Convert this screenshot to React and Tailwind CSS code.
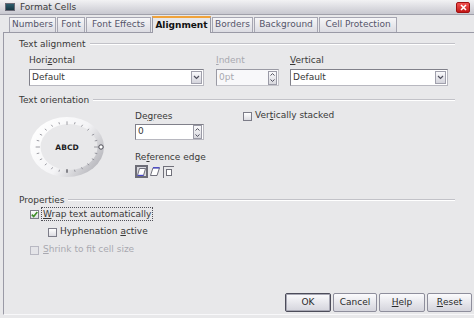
const font = "font-['DejaVu_Sans','Liberation_Sans',sans-serif]";

function Chevron() {
  return (
    <svg width="7" height="5" viewBox="0 0 7 5">
      <path d="M1 1l2.5 2.5L6 1" fill="none" stroke="#50505e" strokeWidth="1.2" />
    </svg>
  );
}

function Spinner() {
  return (
    <div className="w-[9px] h-[14px] flex flex-col border border-[#9a9aa6] bg-gradient-to-b from-[#fafafc] to-[#d8d8de]">
      <div className="flex-1 flex items-center justify-center">
        <svg width="5" height="3" viewBox="0 0 5 3">
          <path d="M0.5 2.5L2.5 0.6L4.5 2.5" fill="none" stroke="#50505e" strokeWidth="1" />
        </svg>
      </div>
      <div className="flex-1 flex items-center justify-center">
        <svg width="5" height="3" viewBox="0 0 5 3">
          <path d="M0.5 0.5L2.5 2.4L4.5 0.5" fill="none" stroke="#50505e" strokeWidth="1" />
        </svg>
      </div>
    </div>
  );
}

function Select({ className }) {
  return (
    <div className={`h-[17px] bg-white border border-[#80808a] border-b-[#b8b8c0] border-r-[#b8b8c0] flex items-center pl-[2px] pr-[1px] ${className}`}>
      <span className="flex-1">Default</span>
      <span className="w-[11px] h-[13px] border border-[#a0a0ac] bg-gradient-to-b from-[#fafafc] to-[#d4d4dc] flex items-center justify-center">
        <Chevron />
      </span>
    </div>
  );
}

function Check({ checked, disabled }) {
  return (
    <span
      className={`w-[9px] h-[9px] shrink-0 border flex items-center justify-center ${
        disabled ? "border-[#b8b8c2] bg-[#e4e4e8]" : "border-[#7c7c88] bg-gradient-to-b from-white to-[#dcdce2]"
      }`}
    >
      {checked && (
        <svg width="7" height="7" viewBox="0 0 7 7">
          <path d="M0.8 3.6L2.7 5.6L6.3 1" fill="none" stroke="#3f8f2a" strokeWidth="1.6" />
        </svg>
      )}
    </span>
  );
}

function Heading({ children }) {
  return (
    <div className="w-[436px] h-[12px] flex items-center gap-[4px]">
      <span className="leading-[12px]">{children}</span>
      <span className="flex-1 h-[2px] border-t border-[#c2c2c8] border-b border-b-white" />
    </div>
  );
}

function Dial() {
  const ticks = [];
  for (let i = 0; i < 24; i++) {
    const a = (i * 15 * Math.PI) / 180;
    const c = Math.cos(a);
    const s = Math.sin(a);
    const r1 = i % 6 === 0 ? 0.82 : 0.87;
    ticks.push(
      <line
        key={i}
        x1={40 + c * 33 * r1}
        y1={34 - s * 27 * r1}
        x2={40 + c * 33 * 0.95}
        y2={34 - s * 27 * 0.95}
        stroke={i === 18 ? "#505058" : "#85858e"}
        strokeWidth={i === 18 ? 1.3 : 0.8}
      />
    );
  }
  return (
    <svg width="80" height="68" viewBox="0 0 80 68">
      <defs>
        <linearGradient id="ring" x1="0" y1="0.2" x2="1" y2="0.8">
          <stop offset="0" stopColor="#ffffff" />
          <stop offset="0.55" stopColor="#f4f4f6" />
          <stop offset="1" stopColor="#b0b0b6" />
        </linearGradient>
      </defs>
      <ellipse cx="40" cy="34" rx="37" ry="30" fill="url(#ring)" />
      <ellipse cx="42" cy="34" rx="28.5" ry="23" fill="#e8e8ea" />
      {ticks}
      <circle cx="74" cy="34" r="2.2" fill="#ffffff" stroke="#3a3a44" strokeWidth="0.9" />
      <text x="40" y="37" textAnchor="middle" fontSize="7.5" fontWeight="bold" fill="#1a1a1a" fontFamily="DejaVu Sans, sans-serif">
        ABCD
      </text>
    </svg>
  );
}

function Tab({ label, w, active }) {
  if (active) {
    return (
      <div className={`${w} h-[17px] -mb-px relative z-10 bg-[#e8e8ea] border border-[#9a9aa6] border-b-0 border-t-2 border-t-[#f0a23a] flex items-center justify-center font-bold text-[#111]`}>
        {label}
      </div>
    );
  }
  return (
    <div className={`${w} h-[15px] border border-[#a6a6b2] border-b-0 bg-gradient-to-b from-[#f6f6f8] to-[#dcdce2] flex items-center justify-center text-[#55556a]`}>
      {label}
    </div>
  );
}

function Btn({ children, w, def }) {
  return (
    <div
      className={`${w} h-[19px] rounded-[2px] flex items-center justify-center bg-gradient-to-b from-[#fbfbfd] to-[#d4d4dc] text-[#2a2a2a] border ${
        def ? "border-[#4c4c5a] shadow-[inset_0_0_0_1px_#a8a8b4]" : "border-[#8e8e9c]"
      }`}
    >
      {children}
    </div>
  );
}

export default function App() {
  return (
    <div className={`w-[474px] h-[318px] bg-[#e8e8ea] text-[9px] text-[#383838] overflow-hidden flex flex-col ${font}`}>
      {/* title bar */}
      <div className="h-[15px] shrink-0 flex items-center bg-gradient-to-b from-[#f2f2f4] to-[#c8c8d0] border-b border-[#a0a0aa]">
        <span className="ml-[5px] w-[10px] h-[8px] border border-[#6a6a76] bg-gradient-to-b from-[#2c5d6e] to-[#173844]" />
        <span className="ml-[5px] text-[#3a3a3a] leading-[12px]">Format Cells</span>
        <span className="ml-auto mr-[4px] w-[14px] h-[11px] rounded-[2px] bg-gradient-to-b from-[#f25050] to-[#c41414] border border-[#a01010] flex items-center justify-center">
          <svg width="7" height="7" viewBox="0 0 7 7">
            <path d="M1 1L6 6M6 1L1 6" stroke="#fff" strokeWidth="1.6" />
          </svg>
        </span>
      </div>

      {/* tabs */}
      <div className="h-[17px] shrink-0 flex items-end pl-[9px] gap-[1px]">
        <Tab label="Numbers" w="w-[47px]" />
        <Tab label="Font" w="w-[28px]" />
        <Tab label="Font Effects" w="w-[65px]" />
        <Tab label="Alignment" w="w-[59px]" active />
        <Tab label="Borders" w="w-[41px]" />
        <Tab label="Background" w="w-[64px]" />
        <Tab label="Cell Protection" w="w-[78px]" />
      </div>

      {/* page */}
      <div className="ml-[3px] h-[283px] border-l border-t border-b border-[#9a9aa6] border-b-[#f8f8fa] flex flex-col pl-[15px]">
        <div className="mt-[5px]">
          <Heading>Text alignment</Heading>
        </div>
        <div className="ml-[10px] mt-[4px] flex">
          <div className="w-[175px]">
            <div className="h-[12px] leading-[12px]">
              Hori<span className="underline">z</span>ontal
            </div>
            <Select className="mt-[3px] w-[175px]" />
          </div>
          <div className="ml-[12px] w-[63px]">
            <div className="h-[12px] leading-[12px] text-[#a8a8b0]">
              <span className="underline">I</span>ndent
            </div>
            <div className="mt-[3px] h-[17px] bg-[#f8f8fa] border border-[#9a9aa4] border-b-[#c4c4ca] border-r-[#c4c4ca] flex items-center pl-[2px] pr-[1px]">
              <span className="flex-1 text-[#a8a8b0]">0pt</span>
              <Spinner />
            </div>
          </div>
          <div className="ml-[11px] w-[158px]">
            <div className="h-[12px] leading-[12px]">
              <span className="underline">V</span>ertical
            </div>
            <Select className="mt-[3px] w-[158px]" />
          </div>
        </div>

        <div className="mt-[8px]">
          <Heading>Text orientation</Heading>
        </div>
        <div className="h-[88px] flex items-start">
          <div className="ml-[8px] mt-[7px]">
            <Dial />
          </div>
          <div className="ml-[28px] w-[108px] flex flex-col">
            <div className="mt-[4px] h-[12px] leading-[12px]">
              De<span className="underline">g</span>rees
            </div>
            <div className="mt-[2px] w-[69px] h-[16px] bg-white border border-[#80808a] border-b-[#b8b8c0] border-r-[#b8b8c0] flex items-center pl-[2px] pr-[1px]">
              <span className="flex-1">0</span>
              <Spinner />
            </div>
            <div className="mt-[11px] h-[12px] leading-[12px]">
              Re<span className="underline">f</span>erence edge
            </div>
            <div className="mt-[2px] flex items-center gap-[1px]">
              <span className="w-[13px] h-[13px] border-2 border-[#6c6c76] bg-[#d8d8de] flex items-center justify-center">
                <svg width="9" height="8" viewBox="0 0 9 8">
                  <path d="M2.5 0.5H8.5L6.5 7.5H0.5Z" fill="#fff" stroke="#505060" strokeWidth="0.8" />
                  <path d="M0.5 7.5H6.5" stroke="#4848c8" strokeWidth="1.4" />
                </svg>
              </span>
              <span className="w-[12px] h-[12px] flex items-center justify-center">
                <svg width="10" height="9" viewBox="0 0 10 9">
                  <path d="M3 0.8H9.5L7 8.5H0.5Z" fill="#fff" stroke="#505060" strokeWidth="0.8" />
                  <path d="M3 0.8H9.5" stroke="#4848c8" strokeWidth="1.4" />
                </svg>
              </span>
              <span className="ml-[1px] w-[11px] h-[12px] border-l border-t border-[#70707a] flex items-center justify-center">
                <span className="w-[6px] h-[7px] border border-[#70707a] bg-white" />
              </span>
            </div>
          </div>
          <div className="mt-[4px] flex items-center gap-[3px] h-[12px]">
            <Check />
            <span>
              Ver<span className="underline">t</span>ically stacked
            </span>
          </div>
        </div>

        <Heading>Properties</Heading>
        <div className="ml-[11px] mt-[1px] flex items-center gap-[2px] h-[14px]">
          <Check checked />
          <span className="border border-dotted border-[#505058] px-[1px] leading-[12px]">
            <span className="underline">W</span>rap text automatically
          </span>
        </div>
        <div className="ml-[29px] mt-[5px] flex items-center gap-[3px] h-[12px]">
          <Check />
          <span>
            Hyphenation <span className="underline">a</span>ctive
          </span>
        </div>
        <div className="ml-[11px] mt-[6px] flex items-center gap-[4px] h-[12px] text-[#a8a8b0]">
          <Check disabled />
          <span>
            <span className="underline">S</span>hrink to fit cell size
          </span>
        </div>

        <div className="mt-auto mb-[2px] flex justify-end gap-[2px] pr-[2px]">
          <Btn w="w-[46px]" def>
            OK
          </Btn>
          <Btn w="w-[44px]">Cancel</Btn>
          <Btn w="w-[46px]">
            <span className="underline">H</span>elp
          </Btn>
          <Btn w="w-[45px]">
            <span className="underline">R</span>eset
          </Btn>
        </div>
      </div>
    </div>
  );
}
